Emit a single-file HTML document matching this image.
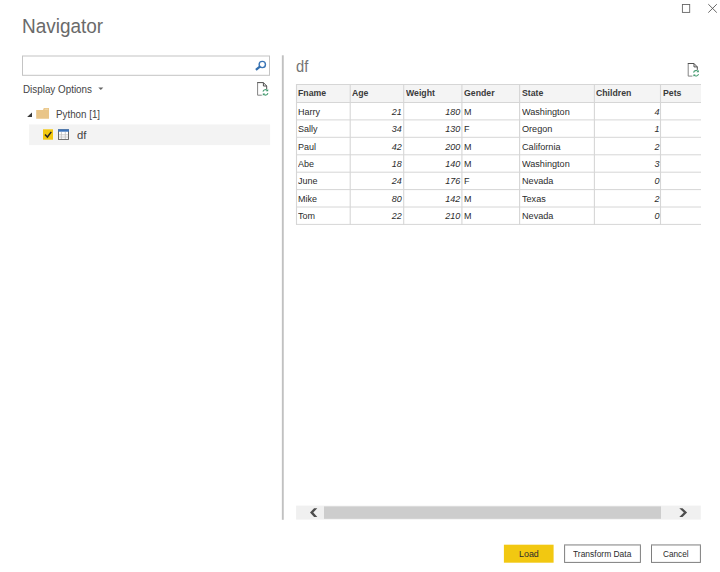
<!DOCTYPE html>
<html><head><meta charset="utf-8"><title>Navigator</title>
<style>
html,body{margin:0;padding:0;background:#fff;}
body{width:720px;height:572px;position:relative;overflow:hidden;font-family:"Liberation Sans",sans-serif;color:#3a3a3a;}
.abs{position:absolute;}
.x{position:absolute;white-space:nowrap;line-height:1;transform-origin:0 0;}
.r{transform-origin:100% 0;}
.b{font-weight:bold;}
.i{font-style:italic;}
</style></head><body>
<svg class="abs" style="left:0;top:0" width="720" height="572" viewBox="0 0 720 572">
<rect x="682.4" y="4.5" width="7.3" height="7.9" fill="none" stroke="#666" stroke-width="0.9"/>
<path d="M708.3 4.2 L716.8 12.6 M716.8 4.2 L708.3 12.6" stroke="#555" stroke-width="0.9" fill="none"/>
<rect x="22.5" y="56" width="247" height="19.3" fill="#fff" stroke="#c4c4c4" stroke-width="1"/>
<circle cx="262.3" cy="64.5" r="3.15" fill="none" stroke="#3a75b6" stroke-width="1.4"/><path d="M260.2 66.3 L255.9 69.8" stroke="#346fae" stroke-width="2.3"/>
<path d="M98.3 87.4 H103.3 L100.8 90 Z" fill="#666"/>
<g transform="translate(257.2,82.2)"><path d="M4.6 13 H0.4 V0.4" fill="none" stroke="#777" stroke-width="0.9"/><path d="M0 0.4 H6.2 L9.5 3.8 V6.8 M6.2 0.4 V3.8 H9.5" fill="none" stroke="#505050" stroke-width="1"/><path d="M5.8 9.5 a2.5 2.5 0 0 1 4.4 -1.1 M10.7 10.9 a2.5 2.5 0 0 1 -4.4 1.1" fill="none" stroke="#4a9e74" stroke-width="1.1"/><path d="M11 6.9 V9.1 H8.8 Z M5.6 13.5 V11.3 H7.8 Z" fill="#3c9468"/></g>
<g transform="translate(687.8,63.1)"><path d="M4.6 13 H0.4 V0.4" fill="none" stroke="#777" stroke-width="0.9"/><path d="M0 0.4 H6.2 L9.5 3.8 V6.8 M6.2 0.4 V3.8 H9.5" fill="none" stroke="#505050" stroke-width="1"/><path d="M5.8 9.5 a2.5 2.5 0 0 1 4.4 -1.1 M10.7 10.9 a2.5 2.5 0 0 1 -4.4 1.1" fill="none" stroke="#4a9e74" stroke-width="1.1"/><path d="M11 6.9 V9.1 H8.8 Z M5.6 13.5 V11.3 H7.8 Z" fill="#3c9468"/></g>
<rect x="29.1" y="124.4" width="241" height="20.7" fill="#f3f3f3"/>
<path d="M32 112.4 V117 H27.1 Z" fill="#3a3a3a"/>
<path d="M36.2 110 H43 L43.8 108 H49 V118.8 H36.2 Z" fill="#e9c588"/><rect x="44.6" y="108.8" width="3.6" height="0.8" fill="#f5dfb8"/>
<rect x="43" y="129.3" width="10" height="10.4" fill="#f2c811"/><path d="M45 134.5 L47.4 137 L51.3 131.9" fill="none" stroke="#252525" stroke-width="1.5"/>
<rect x="58.5" y="129.8" width="10" height="9.6" fill="#fff" stroke="#5a5a5a" stroke-width="0.9"/><rect x="58" y="129.3" width="11" height="2.4" fill="#3b73b9"/><path d="M59 134.8 H68 M59 137 H68 M61.4 132 V139 M65.3 132 V139" stroke="#bdbdbd" stroke-width="0.8"/>
<rect x="281.85" y="55.3" width="1.15" height="464.5" fill="#c1c1c1"/><rect x="283" y="55.3" width="1" height="464.5" fill="#d0d0d0"/>
<rect x="296" y="84" width="405" height="18.5" fill="#f4f4f4"/>
<path d="M296 84.5 H701" stroke="#d6d6d6" stroke-width="1"/>
<path d="M296 102.5 H701" stroke="#d6d6d6" stroke-width="1"/>
<path d="M296 119.9 H701" stroke="#d6d6d6" stroke-width="1"/>
<path d="M296 137.3 H701" stroke="#d6d6d6" stroke-width="1"/>
<path d="M296 154.8 H701" stroke="#d6d6d6" stroke-width="1"/>
<path d="M296 172.2 H701" stroke="#d6d6d6" stroke-width="1"/>
<path d="M296 189.6 H701" stroke="#d6d6d6" stroke-width="1"/>
<path d="M296 207.0 H701" stroke="#d6d6d6" stroke-width="1"/>
<path d="M296 224.4 H701" stroke="#d6d6d6" stroke-width="1"/>
<path d="M296.5 84 V224.9" stroke="#d6d6d6" stroke-width="1.1"/>
<path d="M350.2 84 V224.9" stroke="#d6d6d6" stroke-width="1.1"/>
<path d="M403.7 84 V224.9" stroke="#d6d6d6" stroke-width="1.1"/>
<path d="M461.9 84 V224.9" stroke="#d6d6d6" stroke-width="1.1"/>
<path d="M519.6 84 V224.9" stroke="#d6d6d6" stroke-width="1.1"/>
<path d="M594.4 84 V224.9" stroke="#d6d6d6" stroke-width="1.1"/>
<path d="M660.5 84 V224.9" stroke="#d6d6d6" stroke-width="1.1"/>
<rect x="296.1" y="505.6" width="404.7" height="14" fill="#f0f0f0"/><rect x="324" y="506.4" width="337" height="12.4" fill="#cdcdcd"/>
<path d="M317.3 508.2 H314.1 L310 512.55 L314.1 516.9 H317.3 L313.3 512.55 Z" fill="#4d4d4d"/>
<path d="M679.3 508.2 H682.5 L687.1 512.55 L682.5 516.9 H679.3 L683.8 512.55 Z" fill="#4d4d4d"/>
<rect x="503.9" y="544.7" width="49.7" height="18" fill="#f2c811"/>
<rect x="564.6" y="544.9" width="75.8" height="17.5" fill="#fff" stroke="#7e7e7e" stroke-width="1"/><path d="M564.6 544.9 H640.4" stroke="#bcbcbc" stroke-width="1"/>
<rect x="651.5" y="544.9" width="48.9" height="17.5" fill="#fff" stroke="#7e7e7e" stroke-width="1"/><path d="M651.5 544.9 H700.4" stroke="#bcbcbc" stroke-width="1"/>
</svg>
<div class="x " style="left:22.3px;top:16.09px;font-size:20.1px;color:#6a6a6a;transform:scaleX(0.944)">Navigator</div>
<div class="x " style="left:22.5px;top:83.89px;font-size:11px;color:#444;transform:scaleX(0.895)">Display Options</div>
<div class="x " style="left:56.3px;top:109.39px;font-size:11px;color:#444;transform:scaleX(0.89)">Python [1]</div>
<div class="x " style="left:77.2px;top:129.89px;font-size:11px;color:#444;transform:scaleX(1.03)">df</div>
<div class="x " style="left:295.8px;top:59px;font-size:15.8px;color:#747474;transform:scaleX(0.93)">df</div>
<div class="x b" style="left:297.9px;top:87.89px;font-size:9.7px;color:#3b3b3b;transform:scaleX(0.9)">Fname</div>
<div class="x b" style="left:352.2px;top:87.89px;font-size:9.7px;color:#3b3b3b;transform:scaleX(0.9)">Age</div>
<div class="x b" style="left:406.0px;top:87.89px;font-size:9.7px;color:#3b3b3b;transform:scaleX(0.9)">Weight</div>
<div class="x b" style="left:463.7px;top:87.89px;font-size:9.7px;color:#3b3b3b;transform:scaleX(0.9)">Gender</div>
<div class="x b" style="left:521.8px;top:87.89px;font-size:9.7px;color:#3b3b3b;transform:scaleX(0.9)">State</div>
<div class="x b" style="left:596.3px;top:87.89px;font-size:9.7px;color:#3b3b3b;transform:scaleX(0.9)">Children</div>
<div class="x b" style="left:662.6px;top:87.89px;font-size:9.7px;color:#3b3b3b;transform:scaleX(0.9)">Pets</div>
<div class="x " style="left:298.4px;top:107px;font-size:9.7px;color:#2c2c2c;transform:scaleX(0.93)">Harry</div>
<div class="x r i" style="right:318.7px;top:107px;font-size:9.7px;color:#2c2c2c;transform:scaleX(0.93)">21</div>
<div class="x r i" style="right:259.7px;top:107px;font-size:9.7px;color:#2c2c2c;transform:scaleX(0.93)">180</div>
<div class="x " style="left:463.7px;top:107px;font-size:9.7px;color:#2c2c2c;transform:scaleX(0.93)">M</div>
<div class="x " style="left:522.2px;top:107px;font-size:9.7px;color:#2c2c2c;transform:scaleX(0.94)">Washington</div>
<div class="x r i" style="right:60.7px;top:107px;font-size:9.7px;color:#2c2c2c;transform:scaleX(0.93)">4</div>
<div class="x " style="left:298.4px;top:124px;font-size:9.7px;color:#2c2c2c;transform:scaleX(0.93)">Sally</div>
<div class="x r i" style="right:318.7px;top:124px;font-size:9.7px;color:#2c2c2c;transform:scaleX(0.93)">34</div>
<div class="x r i" style="right:259.7px;top:124px;font-size:9.7px;color:#2c2c2c;transform:scaleX(0.93)">130</div>
<div class="x " style="left:463.7px;top:124px;font-size:9.7px;color:#2c2c2c;transform:scaleX(0.93)">F</div>
<div class="x " style="left:522.2px;top:124px;font-size:9.7px;color:#2c2c2c;transform:scaleX(0.94)">Oregon</div>
<div class="x r i" style="right:60.7px;top:124px;font-size:9.7px;color:#2c2c2c;transform:scaleX(0.93)">1</div>
<div class="x " style="left:298.4px;top:142px;font-size:9.7px;color:#2c2c2c;transform:scaleX(0.93)">Paul</div>
<div class="x r i" style="right:318.7px;top:142px;font-size:9.7px;color:#2c2c2c;transform:scaleX(0.93)">42</div>
<div class="x r i" style="right:259.7px;top:142px;font-size:9.7px;color:#2c2c2c;transform:scaleX(0.93)">200</div>
<div class="x " style="left:463.7px;top:142px;font-size:9.7px;color:#2c2c2c;transform:scaleX(0.93)">M</div>
<div class="x " style="left:522.2px;top:142px;font-size:9.7px;color:#2c2c2c;transform:scaleX(0.94)">California</div>
<div class="x r i" style="right:60.7px;top:142px;font-size:9.7px;color:#2c2c2c;transform:scaleX(0.93)">2</div>
<div class="x " style="left:298.4px;top:159px;font-size:9.7px;color:#2c2c2c;transform:scaleX(0.93)">Abe</div>
<div class="x r i" style="right:318.7px;top:159px;font-size:9.7px;color:#2c2c2c;transform:scaleX(0.93)">18</div>
<div class="x r i" style="right:259.7px;top:159px;font-size:9.7px;color:#2c2c2c;transform:scaleX(0.93)">140</div>
<div class="x " style="left:463.7px;top:159px;font-size:9.7px;color:#2c2c2c;transform:scaleX(0.93)">M</div>
<div class="x " style="left:522.2px;top:159px;font-size:9.7px;color:#2c2c2c;transform:scaleX(0.94)">Washington</div>
<div class="x r i" style="right:60.7px;top:159px;font-size:9.7px;color:#2c2c2c;transform:scaleX(0.93)">3</div>
<div class="x " style="left:298.4px;top:176px;font-size:9.7px;color:#2c2c2c;transform:scaleX(0.93)">June</div>
<div class="x r i" style="right:318.7px;top:176px;font-size:9.7px;color:#2c2c2c;transform:scaleX(0.93)">24</div>
<div class="x r i" style="right:259.7px;top:176px;font-size:9.7px;color:#2c2c2c;transform:scaleX(0.93)">176</div>
<div class="x " style="left:463.7px;top:176px;font-size:9.7px;color:#2c2c2c;transform:scaleX(0.93)">F</div>
<div class="x " style="left:522.2px;top:176px;font-size:9.7px;color:#2c2c2c;transform:scaleX(0.94)">Nevada</div>
<div class="x r i" style="right:60.7px;top:176px;font-size:9.7px;color:#2c2c2c;transform:scaleX(0.93)">0</div>
<div class="x " style="left:298.4px;top:194px;font-size:9.7px;color:#2c2c2c;transform:scaleX(0.93)">Mike</div>
<div class="x r i" style="right:318.7px;top:194px;font-size:9.7px;color:#2c2c2c;transform:scaleX(0.93)">80</div>
<div class="x r i" style="right:259.7px;top:194px;font-size:9.7px;color:#2c2c2c;transform:scaleX(0.93)">142</div>
<div class="x " style="left:463.7px;top:194px;font-size:9.7px;color:#2c2c2c;transform:scaleX(0.93)">M</div>
<div class="x " style="left:522.2px;top:194px;font-size:9.7px;color:#2c2c2c;transform:scaleX(0.94)">Texas</div>
<div class="x r i" style="right:60.7px;top:194px;font-size:9.7px;color:#2c2c2c;transform:scaleX(0.93)">2</div>
<div class="x " style="left:298.4px;top:211px;font-size:9.7px;color:#2c2c2c;transform:scaleX(0.93)">Tom</div>
<div class="x r i" style="right:318.7px;top:211px;font-size:9.7px;color:#2c2c2c;transform:scaleX(0.93)">22</div>
<div class="x r i" style="right:259.7px;top:211px;font-size:9.7px;color:#2c2c2c;transform:scaleX(0.93)">210</div>
<div class="x " style="left:463.7px;top:211px;font-size:9.7px;color:#2c2c2c;transform:scaleX(0.93)">M</div>
<div class="x " style="left:522.2px;top:211px;font-size:9.7px;color:#2c2c2c;transform:scaleX(0.94)">Nevada</div>
<div class="x r i" style="right:60.7px;top:211px;font-size:9.7px;color:#2c2c2c;transform:scaleX(0.93)">0</div>
<div class="x " style="left:518.6px;top:549.49px;font-size:9.7px;color:#2c2c2c;transform:scaleX(0.92)">Load</div>
<div class="x " style="left:572.5px;top:549.49px;font-size:9.7px;color:#2c2c2c;transform:scaleX(0.872)">Transform Data</div>
<div class="x " style="left:663px;top:549.49px;font-size:9.7px;color:#2c2c2c;transform:scaleX(0.85)">Cancel</div>
</body></html>
